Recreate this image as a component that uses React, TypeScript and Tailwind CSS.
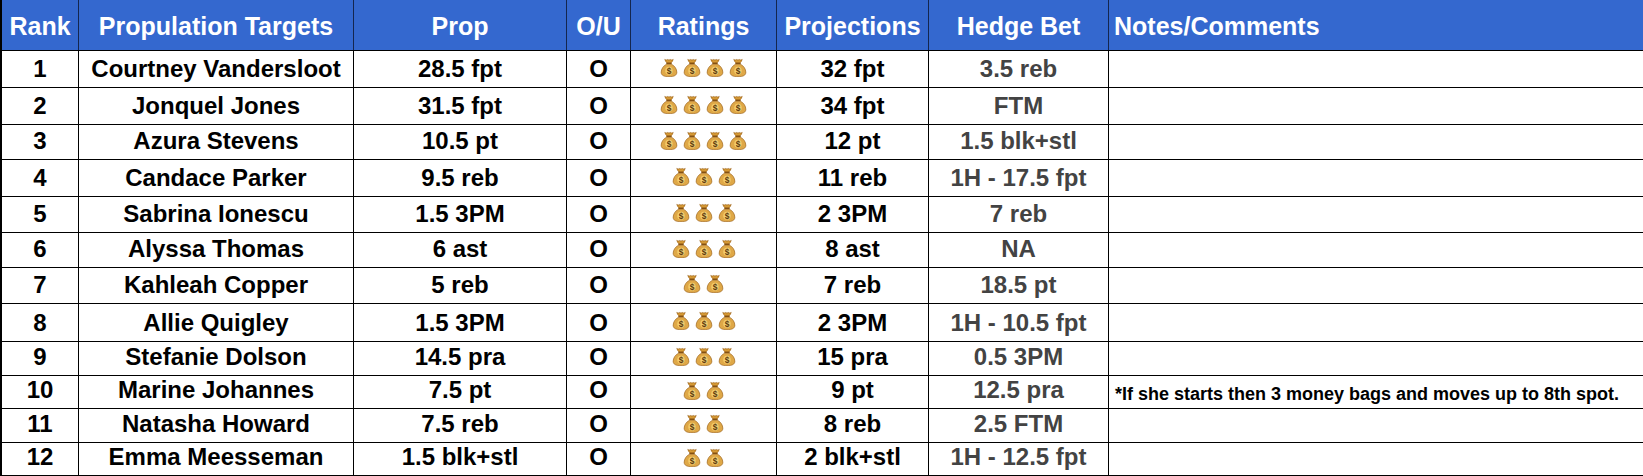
const cols = 'grid grid-cols-[77px_275px_213px_64px_146px_152px_180px_1fr]'

const rows = [
  { h: 'h-[37px]', cells: ['1', 'Courtney Vandersloot', '28.5 fpt', 'O'], bags: 4, proj: '32 fpt', hedge: '3.5 reb', note: '' },
  { h: 'h-[37px]', cells: ['2', 'Jonquel Jones', '31.5 fpt', 'O'], bags: 4, proj: '34 fpt', hedge: 'FTM', note: '' },
  { h: 'h-[35px]', cells: ['3', 'Azura Stevens', '10.5 pt', 'O'], bags: 4, proj: '12 pt', hedge: '1.5 blk+stl', note: '' },
  { h: 'h-[37px]', cells: ['4', 'Candace Parker', '9.5 reb', 'O'], bags: 3, proj: '11 reb', hedge: '1H - 17.5 fpt', note: '' },
  { h: 'h-[36px]', cells: ['5', 'Sabrina Ionescu', '1.5 3PM', 'O'], bags: 3, proj: '2 3PM', hedge: '7 reb', note: '' },
  { h: 'h-[35px]', cells: ['6', 'Alyssa Thomas', '6 ast', 'O'], bags: 3, proj: '8 ast', hedge: 'NA', note: '' },
  { h: 'h-[36px]', cells: ['7', 'Kahleah Copper', '5 reb', 'O'], bags: 2, proj: '7 reb', hedge: '18.5 pt', note: '' },
  { h: 'h-[38px]', cells: ['8', 'Allie Quigley', '1.5 3PM', 'O'], bags: 3, proj: '2 3PM', hedge: '1H - 10.5 fpt', note: '' },
  { h: 'h-[34px]', cells: ['9', 'Stefanie Dolson', '14.5 pra', 'O'], bags: 3, proj: '15 pra', hedge: '0.5 3PM', note: '' },
  { h: 'h-[33px]', cells: ['10', 'Marine Johannes', '7.5 pt', 'O'], bags: 2, proj: '9 pt', hedge: '12.5 pra', note: '*If she starts then 3 money bags and moves up to 8th spot.' },
  { h: 'h-[34px]', cells: ['11', 'Natasha Howard', '7.5 reb', 'O'], bags: 2, proj: '8 reb', hedge: '2.5 FTM', note: '' },
  { h: 'h-[33px]', cells: ['12', 'Emma Meesseman', '1.5 blk+stl', 'O'], bags: 2, proj: '2 blk+stl', hedge: '1H - 12.5 fpt', note: '' },
]

const headers = ['Rank', 'Propulation Targets', 'Prop', 'O/U', 'Ratings', 'Projections', 'Hedge Bet']

// money bag emoji, drawn since there is no colour emoji font
const MoneyBag = () => (
  <svg width="18" height="19" viewBox="0 0 32 34">
    <path d="M8.5 2.5c2 1.3 3.7 1.3 5.3 0.2 1.3 1 3 1 4.4 0 1.6 1.1 3.3 1.1 5.3-0.2-0.6 2.6-2.3 5-4.2 6.4h-6.6c-1.9-1.4-3.6-3.8-4.2-6.4z" fill="#d69a36" stroke="#9a5f14" strokeWidth="1.2" />
    <path d="M11.6 8.6h8.8l0.7 2.8h-10.2z" fill="#7d4e15" />
    <path d="M11.8 11c-6.2 3-9.8 9-9.8 14.6 0 5 4.2 7.9 14 7.9s14-2.9 14-7.9c0-5.6-3.6-11.6-9.8-14.6z" fill="#dfa847" stroke="#9a5f14" strokeWidth="1.2" />
    <ellipse cx="16" cy="22.8" rx="6.6" ry="7" fill="#f2cd70" />
    <text x="16" y="28.2" textAnchor="middle" fontSize="15" fontWeight="700" fill="#5e3c0e" fontFamily="Liberation Sans, Arial, sans-serif">$</text>
  </svg>
)

const App = () => {
  const cell = 'flex items-end justify-center border-r border-black pb-[5px] leading-[26px] whitespace-nowrap'

  return (
    <div className="w-[1643px] h-[476px] overflow-hidden bg-white font-['Liberation_Sans',Arial,sans-serif] text-[24px] font-bold text-black border-l-2 border-black">
      <div className={`${cols} h-[51px] bg-[#3468cf] text-[25px] text-white border-b border-black`}>
        {headers.map((h) => (
          <div key={h} className="flex items-center justify-center pt-1 border-r border-[#14264f] whitespace-nowrap">{h}</div>
        ))}
        <div className="flex items-center pl-[5px] pt-1 whitespace-nowrap">Notes/Comments</div>
      </div>

      {rows.map((r) => (
        <div key={r.cells[0]} className={`${cols} ${r.h} border-b border-black`}>
          {r.cells.map((c, i) => (
            <div key={i} className={cell}>{c}</div>
          ))}
          <div className="flex items-center justify-center gap-[5px] border-r border-black pb-[4px]">
            {Array.from({ length: r.bags }).map((_, i) => (
              <MoneyBag key={i} />
            ))}
          </div>
          <div className={cell}>{r.proj}</div>
          <div className={`${cell} text-[#434343]`}>{r.hedge}</div>
          <div className="flex items-end pl-[6px] pb-[4px] text-[18px] leading-[20px] whitespace-nowrap">{r.note}</div>
        </div>
      ))}
    </div>
  )
}

export default App
